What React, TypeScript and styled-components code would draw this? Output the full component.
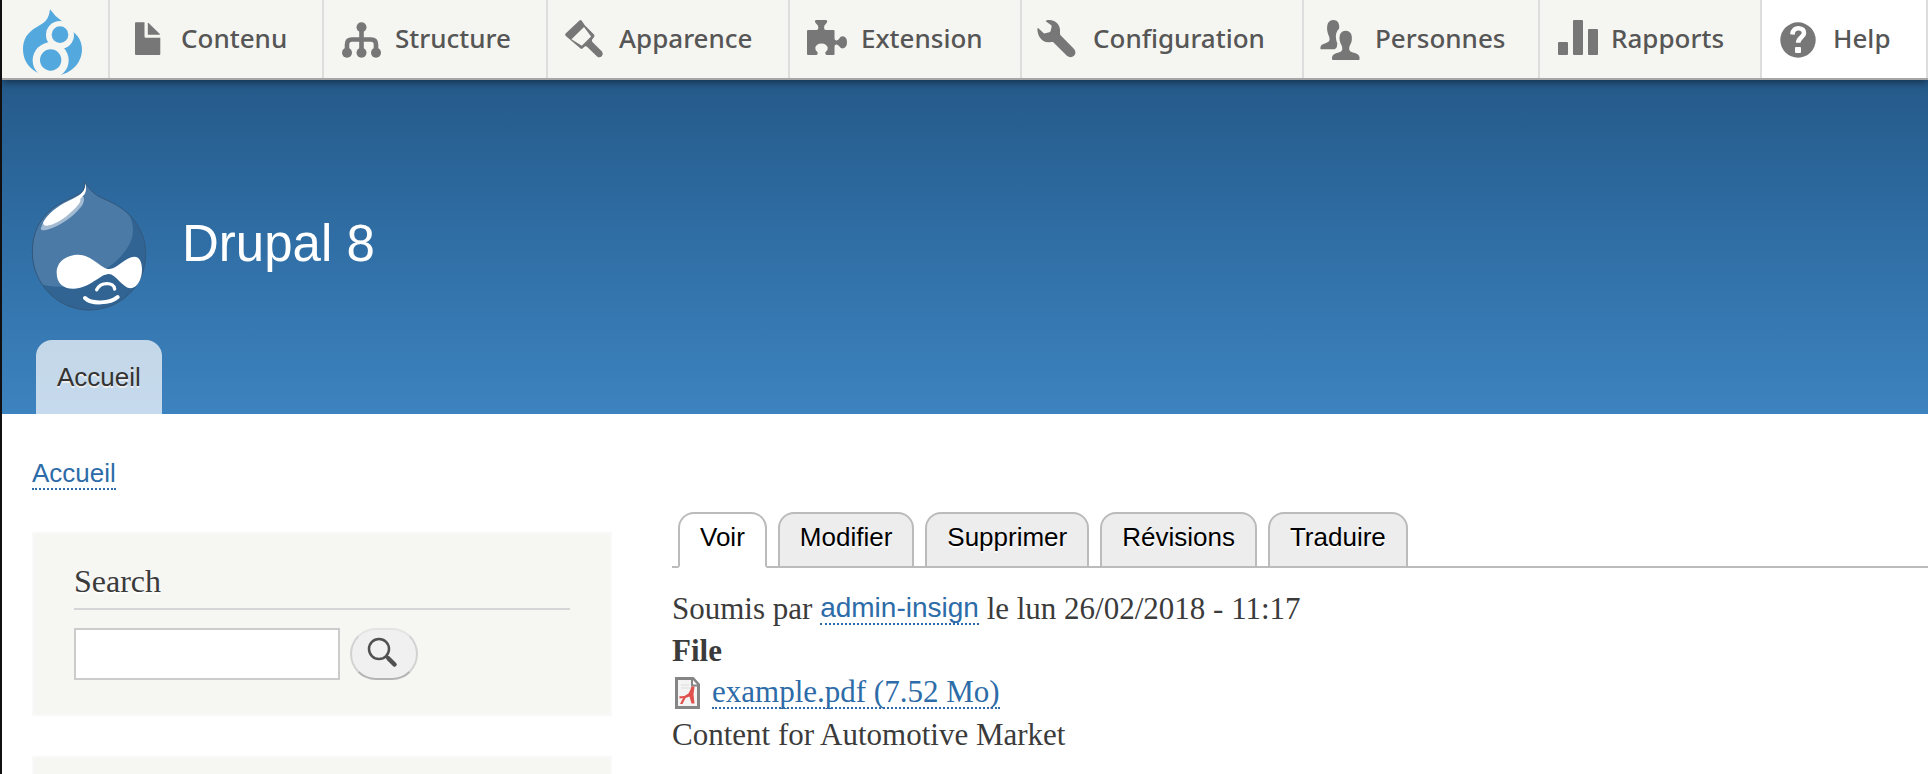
import React from "react";
import styled, { createGlobalStyle } from "styled-components";

const GlobalStyle = createGlobalStyle`
  *, *::before, *::after { box-sizing: border-box; }
  html, body, #root { height: 100%; }
  body {
    margin: 0;
    background: #fff;
    color: #3b3b3b;
    font-family: "Liberation Serif", Georgia, serif;
    font-size: 31px;
    line-height: 42px;
    overflow: hidden;
  }
`;

const sans = `"Liberation Sans", "Helvetica Neue", Helvetica, Arial, sans-serif`;

const Page = styled.div`
  height: 100%;
  overflow: hidden;
  border-left: 2px solid #101012;
`;

const Toolbar = styled.nav`
  position: relative;
  display: flex;
  height: 80px;
  background: #f5f5f1;
  border-bottom: 2px solid #a6a6a6;
  box-shadow: 0 2px 8px rgba(0, 0, 0, 0.5);
`;

const HomeLink = styled.a`
  flex: 0 0 108px;
  padding: 8px 0 0 18px;
  border-right: 2px solid #ddd;
`;

const ToolbarLink = styled.a<{ $width: number; $active?: boolean }>`
  display: flex;
  flex: 0 0 ${(p) => p.$width}px;
  align-items: flex-start;
  gap: 14px;
  padding: 20px 0 0 17px;
  border-right: 2px solid #ddd;
  background: ${(p) => (p.$active ? "#fff" : "transparent")};
  color: #565656;
  font: 500 26px/36px "Noto Sans", "Lucida Grande", sans-serif;
  text-decoration: none;
  white-space: nowrap;

  svg {
    flex: none;
    fill: #777;
  }
`;

const Header = styled.header`
  display: flex;
  flex-direction: column;
  justify-content: space-between;
  height: 334px;
  padding: 100px 28px 0;
  background: linear-gradient(#255a8a, #306fa6 50%, #3d83bf);
`;

const Branding = styled.div`
  display: flex;
  gap: 34px;
`;

const SiteName = styled.a`
  padding-top: 32px;
  color: #fff;
  font: 51px/64px ${sans};
  text-decoration: none;
`;

const MenuTab = styled.a`
  align-self: flex-start;
  height: 74px;
  margin-left: 6px;
  padding: 0 21px;
  border-radius: 16px 16px 0 0;
  background: rgba(255, 255, 255, 0.7);
  color: #333;
  font: 26px/74px ${sans};
  text-decoration: none;
  text-shadow: 0 2px 0 #eee;
`;

const Link = styled.a<{ $sans?: boolean }>`
  color: #2d6ca8;
  font-family: ${(p) => (p.$sans ? sans : "inherit")};
  font-size: ${(p) => (p.$sans ? "28px" : "inherit")};
  line-height: 30px;
  text-decoration: none;
  border-bottom: 2px dotted #2d6ca8;
`;

const Breadcrumb = styled.nav`
  padding: 37px 30px 5px;

  a {
    font-size: 26px;
  }
`;

const Columns = styled.div`
  display: grid;
  grid-template-columns: minmax(0, 580fr) minmax(0, 1256fr);
  gap: 60px;
  padding-left: 30px;
`;

const Sidebar = styled.aside`
  display: flex;
  flex-direction: column;
  gap: 40px;
  padding-top: 34px;
`;

const Block = styled.section`
  min-height: 184px;
  padding: 24px 40px 34px;
  border: 2px solid #f9f9f9;
  background: #f6f7f2;
`;

const BlockTitle = styled.h2`
  margin: 0 0 18px;
  padding: 2px 0 6px;
  border-bottom: 2px solid #d3d5d7;
  font-size: 32px;
  font-weight: 400;
  line-height: 42px;
  text-shadow: 0 2px 0 #fff;
`;

const SearchForm = styled.form`
  display: flex;
  gap: 10px;
`;

const SearchInput = styled.input`
  width: 266px;
  height: 52px;
  padding: 4px 8px;
  border: 2px solid #ccc;
  border-radius: 0;
  background: #fff;
  font: 26px ${sans};
`;

const SearchButton = styled.button`
  display: grid;
  place-items: center;
  width: 68px;
  height: 52px;
  padding: 0 2px 2px 0;
  border: 2px solid;
  border-color: #e4e4e4 #d2d2d2 #b4b4b4;
  border-radius: 26px;
  background: #f0f0f0;
`;

const Main = styled.main`
  padding-top: 14px;
`;

const Tabs = styled.nav`
  display: flex;
  gap: 11px;
  height: 56px;
  padding-left: 6px;
  box-shadow: inset 0 -2px 0 #bbb;
`;

const Tab = styled.a<{ $active?: boolean }>`
  height: 56px;
  padding: 0 20px;
  border: 2px solid #bbb;
  border-bottom-color: ${(p) => (p.$active ? "#fff" : "#bbb")};
  border-radius: 16px 16px 0 0;
  background: ${(p) => (p.$active ? "#fff" : "#ededed")};
  color: #000;
  font: 26px/46px ${sans};
  text-decoration: none;
  text-shadow: 0 2px 0 #fff;
`;

const Article = styled.article`
  padding-top: 20px;
`;

const Line = styled.div<{ $bold?: boolean }>`
  display: flex;
  align-items: center;
  height: 42px;
  font-weight: ${(p) => (p.$bold ? 700 : 400)};
  white-space: pre;
`;

const PdfGlyph = styled.svg`
  flex: none;
  margin: 0 12px 0 3px;
`;

const icons: Record<string, React.ReactNode> = {
  content: (
    <>
      <path d="M9 2.3h8.5v14.2q0 1.3 1.3 1.3h14.5V34q0 1-1 1H9q-1 0-1-1V3.3q0-1 1-1z" />
      <path d="M20.8 3.4q0-1 .8-.3L32.8 14q.6.8-.5.8H20.8z" />
    </>
  ),
  structure: (
    <>
      <path d="M20.500 7v26M6 33v-8.500q0-5 5-5h19q5 0 5 5V33" fill="none" stroke="#777" strokeWidth="4.600" />
      <circle cx="20.500" cy="7.300" r="5" />
      <circle cx="6" cy="32.700" r="5" />
      <circle cx="20.500" cy="32.700" r="5" />
      <circle cx="35" cy="32.700" r="5" />
    </>
  ),
  appearance: (
    <path
      fillRule="evenodd"
      d="M14.500.5Q15.700-.5 16.700.7L20 5.500l9 9q1.300 1.500-.3 3l-1.700 2.200q-.4 1.300.4 2.200l9.600 9.700q1.700 2.400-.2 4.700-2.400 2-4.700.2L22 26.700q-1-.8-2-.4l-2.500 2.200q-1 .8-2 0L.8 16q-1.400-1.200-.2-2.400zM19 7 6.500 19.200l10.300 6.600 9.300-9.200z"
    />
  ),
  extension: (
    <path d="M8.600 0h10.800q1.800 1.500 0 3.300-2.400 1.700-2.400 4.200 0 2.500 2 2.500h7.500q1 0 1 1v7.500q0 2 2 2 1.600 0 2.600-1.800 1.500-2.400 3.500-2.400 4.400.6 4.400 6t-4.400 6.200q-2.300 0-3.600-2.400-1-1.600-2.500-1.600-2 0-2 2V34q0 1-1 1h-7q-2.400-1.500-.2-3.700 1.600-1.300 1.400-3.700-.8-4-6.200-4.200-5.400.2-6.200 4.200-.2 2.400 1.400 3.700 2.200 2.200-.2 3.700H1q-1 0-1-1V11q0-1 1-1h8.400q2 0 2-2.500 0-2.500-2.600-4.200-1.800-1.800-.2-3.300z" />
  ),
  configuration: (
    <path d="M7.300.5C14-1.300 20.500 3 21 9.500q-.2 4 .3 5.500L34.600 28.500q3.300 3.700.7 7-3.600 3.400-7.400.3L14 22q-1.500-.3-4.500.3C2.500 22.300-1.800 15.500-1.600 8.700q.3-1.300 1.300-.2l4.500 4.300q.8.800 2 .5l4.200-1q1-.3 1.200-1.300l1-4.300q.2-1-.6-1.800L7 1.500q-.6-.7.300-1z" />
  ),
  people: (
    <g transform="translate(-1 0)">
      <path d="M13.300 0c4.200 0 6.400 3.300 5.900 8.400-3 2.600-4 6.600-3 11.600.5 2.300 1.500 3.300 1 4.600-.7 1.800.8 2.400-2.600 4.700H.5q-.8-4 3-5.300C7.500 22.400 9.500 21.800 9.600 19.500c.2-2.500-1.700-5-2.200-8C6.400 5 8 0 13.300 0z" />
      <path
        d="M25.700 10.700c4.800 0 7 4.200 6 10-.5 3.300-2.600 4.800-2.500 8 0 3 2.800 3.300 5.700 4.300 3.600 1 5 3 4.700 6q0 1-1 1H13q-1 0-1-1c-.3-3 1.100-5 4.700-6 2.900-1 5.600-1.300 5.600-4.300.1-3.200-2-4.700-2.500-8-1-5.800 1-10 5.900-10z"
        stroke="#f5f5f1"
        strokeWidth="4"
        paintOrder="stroke"
      />
    </g>
  ),
  reports: (
    <>
      <rect x="1" y="22" width="10" height="13" rx="1" />
      <rect x="16" y="0" width="10" height="35" rx="1" />
      <rect x="31" y="9" width="10" height="26" rx="1" />
    </>
  ),
  help: (
    <>
      <circle cx="19" cy="20" r="17.700" />
      <path
        d="M13.400 14.500C13.700 9.800 16.700 8 19.700 8.200c3.600.2 5.500 2.300 5.300 5-.2 4-5.800 4.200-5.800 9.500"
        fill="none"
        stroke="#fff"
        strokeWidth="4.600"
      />
      <rect x="16" y="27" width="6" height="6" rx="1" fill="#fff" />
    </>
  ),
};

const toolbarItems = [
  { label: "Contenu", icon: "content", width: 214 },
  { label: "Structure", icon: "structure", width: 224 },
  { label: "Apparence", icon: "appearance", width: 242 },
  { label: "Extension", icon: "extension", width: 232 },
  { label: "Configuration", icon: "configuration", width: 282 },
  { label: "Personnes", icon: "people", width: 236 },
  { label: "Rapports", icon: "reports", width: 222 },
  { label: "Help", icon: "help", width: 166, active: true },
];

const tabs = ["Voir", "Modifier", "Supprimer", "Révisions", "Traduire"];

const DropEight = () => (
  <svg width="66" height="68" viewBox="60 24 198 204" aria-hidden="true">
    <path
      fill="#53a9dd"
      d="M150 28C146 60 136 67 112 80 82 96 69 118 69 148c0 46 37 80 88 80 52 0 89-36 89-80 0-20-9-38-25-51L186 64Q165 50 150 28z"
    />
    <circle cx="180" cy="105" r="42" fill="#f5f5f1" />
    <circle cx="152" cy="181" r="54" fill="#f5f5f1" />
    <circle cx="180" cy="104" r="25" fill="#53a9dd" />
    <circle cx="152" cy="180" r="32" fill="#53a9dd" />
  </svg>
);

const Druplicon = () => (
  <svg width="118" height="133" viewBox="30 32 354 399" aria-hidden="true">
    <defs>
      <clipPath id="drop">
        <path d="M194 35c4 10 25 40 50 50 30 14 60 25 90 58 28 32 43 66 43 110 0 100-78 169-170 169S37 345 37 248c0-56 20-98 60-130 32-24 60-32 82-45 12-8 16-18 15-38z" />
      </clipPath>
    </defs>
    <g clipPath="url(#drop)">
      <rect x="30" y="30" width="354" height="400" fill="#316492" />
      <path
        fill="#4a7aa5"
        d="M194 30c4 15 25 45 50 55 30 14 58 24 85 54 14 30 14 62-4 92-24 42-70 74-122 100-46 24-100 26-140 14L30 330V30z"
      />
      <path
        fill="#a3bbd2"
        d="M190 82c4 8 2 20-8 32-22 28-62 56-96 66-12 4-22 4-24-2l8-20L170 86z"
      />
      <path
        fill="#fff"
        d="M195 38c6 20 4 34-8 44-4 4-8 6-6 10 2 8-14 24-34 42-22 20-50 34-66 35-12 1-14-8-8-16 22-32 50-48 84-64 24-12 40-20 38-51z"
      />
    </g>
    <path
      fill="none"
      stroke="#34587c"
      strokeWidth="3"
      d="M194 37c4 10 25 38 50 48 30 14 60 25 90 58 28 32 43 66 43 110 0 100-78 169-170 169S37 345 37 248c0-56 20-98 60-130 32-24 60-32 82-45 12-8 16-18 15-36z"
    />
    <path
      fill="#fff"
      d="M110 310c0-34 30-54 66-54 42 2 66 42 92 43 22 0 48-37 76-37 14 0 22 16 22 38 0 32-16 57-34 57-24 0-44-43-66-43-26 0-56 44-106 44-32 0-50-18-50-48z"
    />
    <g fill="none" stroke="#fff" strokeLinecap="round">
      <path d="M230 361c12-24 52-24 54-2" strokeWidth="10" />
      <path d="M195 386c20 20 76 16 98-3" strokeWidth="12" />
    </g>
  </svg>
);

export default function App() {
  return (
    <>
      <GlobalStyle />
      <Page>
        <Toolbar aria-label="Administration">
          <HomeLink href="#" aria-label="Drupal">
            <DropEight />
          </HomeLink>
          {toolbarItems.map((item) => (
            <ToolbarLink key={item.label} href="#" $width={item.width} $active={item.active}>
              <svg width="40" height="40" viewBox="0 0 40 40" overflow="visible" aria-hidden="true">
                {icons[item.icon]}
              </svg>
              {item.label}
            </ToolbarLink>
          ))}
        </Toolbar>
        <Header>
          <Branding>
            <Druplicon />
            <SiteName href="#">Drupal 8</SiteName>
          </Branding>
          <MenuTab href="#">Accueil</MenuTab>
        </Header>
        <Breadcrumb aria-label="Breadcrumb">
          <Link href="#" $sans>
            Accueil
          </Link>
        </Breadcrumb>
        <Columns>
          <Sidebar>
            <Block>
              <BlockTitle>Search</BlockTitle>
              <SearchForm role="search" onSubmit={(e) => e.preventDefault()}>
                <SearchInput type="search" aria-label="Search" />
                <SearchButton type="submit" aria-label="Submit search">
                  <svg width="32" height="32" viewBox="0 0 32 32" fill="none" stroke="#505050" aria-hidden="true">
                    <circle cx="12" cy="12" r="10" strokeWidth="2.500" />
                    <path d="M19 19l3 3" strokeWidth="3" />
                    <path d="M21.500 21.500l6 6" strokeWidth="4.500" strokeLinecap="round" />
                  </svg>
                </SearchButton>
              </SearchForm>
            </Block>
            <Block />
          </Sidebar>
          <Main>
            <Tabs aria-label="Tabs">
              {tabs.map((label, i) => (
                <Tab key={label} href="#" $active={i === 0}>
                  {label}
                </Tab>
              ))}
            </Tabs>
            <Article>
              <Line>
                Soumis par <Link href="#" $sans>admin-insign</Link> le lun 26/02/2018 - 11:17
              </Line>
              <Line $bold>File</Line>
              <Line>
                <PdfGlyph width="25" height="32" viewBox="0 0 25 32" aria-hidden="true">
                  <path d="M1.500 1.500H18l5.500 6v23h-22z" fill="#f4f4f4" stroke="#858585" strokeWidth="3" />
                  <path d="M17 2v6.500h6" fill="#fff" stroke="#858585" strokeWidth="2" />
                  <path d="M6 8h8M6 11h11" stroke="#dcdcdc" strokeWidth="1" />
                  <path
                    d="M4.500 19q5 1 9-2.500 2-3 3-7h3l-1 8 1 9h-3l-2-7-4 1.500-3 6H5l3-6-3.500.500z"
                    fill="#e0504c"
                  />
                </PdfGlyph>
                <Link href="#">example.pdf (7.52 Mo)</Link>
              </Line>
              <Line>Content for Automotive Market</Line>
            </Article>
          </Main>
        </Columns>
      </Page>
    </>
  );
}
